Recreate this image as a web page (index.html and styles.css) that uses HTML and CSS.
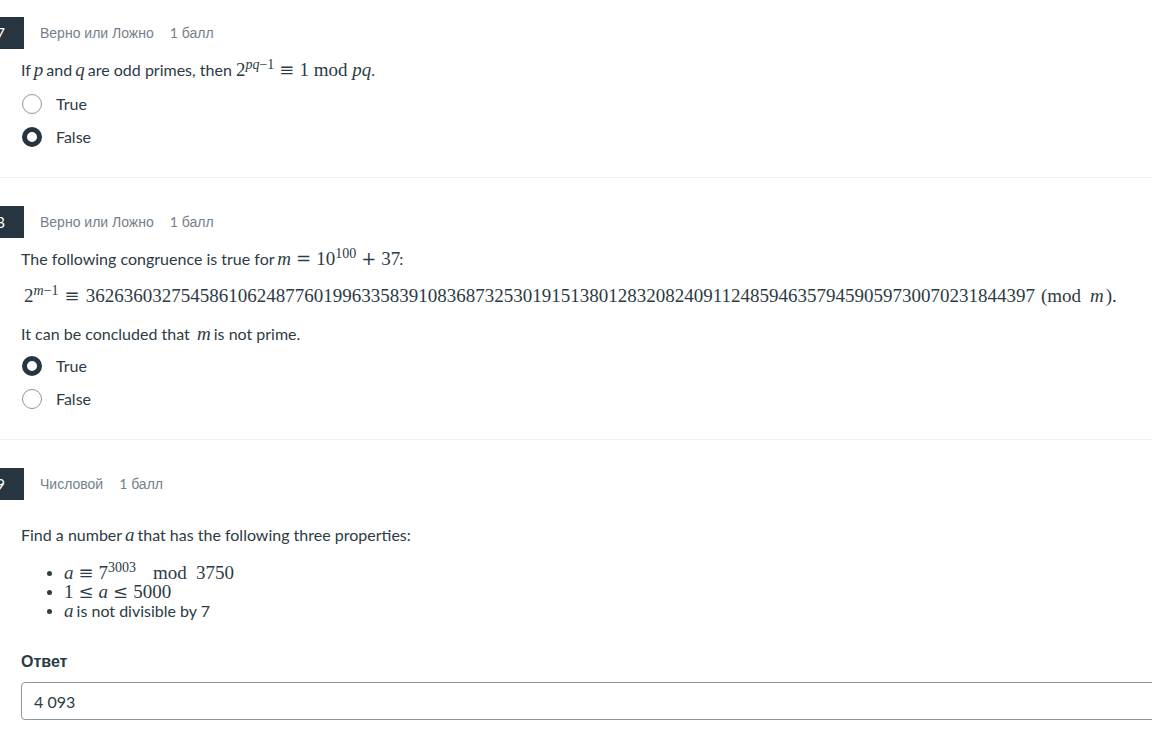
FILE: index.html
```html
<!DOCTYPE html>
<html lang="ru">
<head>
<meta charset="utf-8">
<title>Тест</title>
<link rel="stylesheet" href="styles.css">
</head>
<body>
<main class="quiz">
  <section class="question">
    <header class="head"><span class="number">7</span><span class="kind">Верно или Ложно</span><span class="points"><span class="digit">1</span> балл</span></header>
    <div class="content">
      <p class="prompt" lang="en">If <span class="math var"><i>p</i></span> and <span class="math var"><i>q</i></span> are odd primes, then <span class="math">2<sup><i>pq</i>−1</sup><span class="rel">≡</span>1 mod <i>pq</i></span>.</p>
      <div class="options">
        <label class="option"><input type="radio" name="q7"><span>True</span></label>
        <label class="option"><input type="radio" name="q7" checked><span>False</span></label>
      </div>
    </div>
  </section>
  <section class="question">
    <header class="head"><span class="number">8</span><span class="kind">Верно или Ложно</span><span class="points"><span class="digit">1</span> балл</span></header>
    <div class="content">
      <p class="prompt" lang="en">The following congruence is true for <span class="math var"><i>m</i><span class="rel">=</span>10<sup>100</sup><span class="rel">+</span>37</span>:</p>
      <p class="prompt display" lang="en"><span class="math">2<sup><i>m</i>−1</sup><span class="rel">≡</span>3626360327545861062487760199633583910836873253019151380128320824091124859463579459059730070231844397<span class="modulus">(mod<span class="arg"><i>m</i></span>).</span></span></p>
      <p class="prompt" lang="en">It can be concluded that&nbsp; <span class="math var"><i>m</i></span> is not prime.</p>
      <div class="options close">
        <label class="option"><input type="radio" name="q8" checked><span>True</span></label>
        <label class="option"><input type="radio" name="q8"><span>False</span></label>
      </div>
    </div>
  </section>
  <section class="question">
    <header class="head"><span class="number">9</span><span class="kind">Числовой</span><span class="points"><span class="digit">1</span> балл</span></header>
    <div class="content numeric">
      <p class="prompt" lang="en">Find a number <span class="math var"><i>a</i></span> that has the following three properties:</p>
      <ul class="properties" lang="en">
        <li><span class="math"><i>a</i><span class="rel">≡</span>7<sup>3003</sup><span class="mod">mod</span>3750</span></li>
        <li><span class="math">1<span class="rel">≤</span><i>a</i><span class="rel">≤</span>5000</span></li>
        <li><span class="math var-first"><i>a</i></span> is not divisible by 7</li>
      </ul>
      <label class="answer-label" for="answer">Ответ</label>
      <input class="answer" id="answer" type="text" value="4 093">
    </div>
  </section>
</main>
</body>
</html>
```
FILE: styles.css
```css
* { box-sizing: border-box; }
body {
  margin: 0;
  overflow-x: hidden;
  background: #fff;
  color: #2d3b45;
  font: 16px/24px Lato, "Liberation Sans", sans-serif;
}
.question { padding: 17px 0 24px; }
.question + .question { padding-top: 28px; border-top: 1px solid #f0f2f3; }
.question:last-child { padding-bottom: 12px; }
.head { display: flex; align-items: center; gap: 16px; color: #73818c; font-size: 14px; }
.number {
  width: 48px;
  height: 32px;
  margin-left: -24px;
  padding-right: 19px;
  background: #273540;
  color: #fff;
  font-size: 16px;
  line-height: 32px;
  text-align: right;
}
.kind, .points { font-family: "Liberation Sans", sans-serif; }
.digit { font-family: Lato, sans-serif; }
.content { padding: 9px 0 0 21px; }
.prompt { margin: 0; white-space: nowrap; }
.display { margin: 13px 0 14px; padding-left: 3px; }
.math { font-family: "Liberation Serif", serif; font-size: 19px; line-height: 1; }
.math sup { font-size: 14px; line-height: 0; vertical-align: 7px; }
.var { margin: 0 -1px; }
.var-first { margin-right: -1px; }
.rel { margin: 0 5px; font-family: "DejaVu Serif", serif; font-size: 18px; line-height: 0; }
.display .rel { margin: 0 6px; }
.modulus { margin-left: 6px; }
.arg { margin: 0 2px 0 9px; }
.mod { margin: 0 9px 0 17px; }
.options { display: grid; gap: 9px; padding: 10px 0 4px; }
.options.close { padding-top: 8px; }
.option { display: flex; align-items: center; gap: 14px; width: max-content; }
.option input {
  appearance: none;
  width: 20px;
  height: 20px;
  margin: 0 0 0 1px;
  border: 1px solid #8b969e;
  border-radius: 50%;
}
.option input:checked { border: 5px solid #273540; }
.numeric { padding-top: 23px; }
.properties { margin: 16px 0 30px; padding-left: 43px; line-height: 19px; }
.properties li::marker { font-size: 15px; }
.answer-label { display: block; margin-bottom: 8px; font-family: "Liberation Sans", sans-serif; font-weight: bold; }
.answer {
  display: block;
  width: calc(100% + 8px);
  height: 38px;
  padding: 0 12px;
  border: 1px solid #8b969e;
  border-radius: 4px;
  color: #2d3b45;
  font: inherit;
}
```
